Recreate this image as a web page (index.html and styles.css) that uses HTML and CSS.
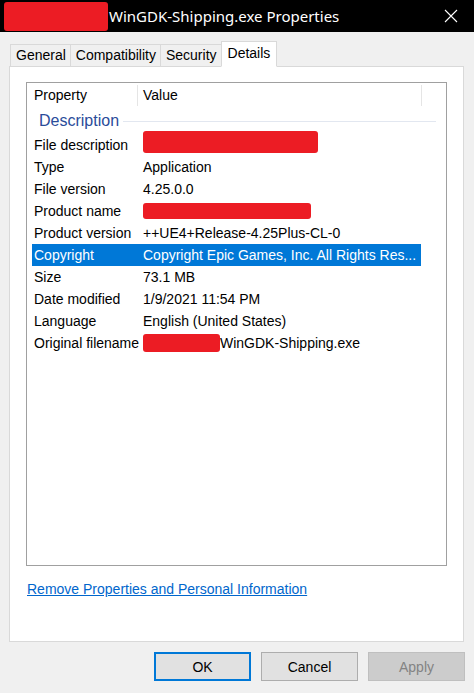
FILE: index.html
```html
<!DOCTYPE html>
<html lang="en">
<head>
    <meta charset="UTF-8">
    <meta name="viewport" content="width=device-width, initial-scale=1.0">
    <title>WinGDK-Shipping.exe Properties</title>
    <link rel="stylesheet" href="styles.css">
</head>
<body>
    <div class="window">
        <div class="titlebar">
            <span class="redact redact-title"></span>
            <span class="title">WinGDK-Shipping.exe Properties</span>
            <svg class="close" width="14" height="14" viewBox="0 0 14 14">
                <path d="M1 1 L13 13 M13 1 L1 13" stroke="#fff" stroke-width="1.1" fill="none"/>
            </svg>
        </div>

        <div class="tabs">
            <div class="tab">General</div>
            <div class="tab">Compatibility</div>
            <div class="tab">Security</div>
            <div class="tab active">Details</div>
        </div>

        <div class="panel">
            <div class="listview">
                <div class="list-header">
                    <div class="col-prop">Property</div>
                    <div class="col-value">Value</div>
                </div>

                <div class="group">
                    <span class="group-title">Description</span>
                    <span class="group-line"></span>
                </div>

                <div class="row">
                    <div class="cell-prop">File description</div>
                    <div class="cell-value"><span class="redact redact-desc"></span></div>
                </div>
                <div class="row">
                    <div class="cell-prop">Type</div>
                    <div class="cell-value">Application</div>
                </div>
                <div class="row">
                    <div class="cell-prop">File version</div>
                    <div class="cell-value">4.25.0.0</div>
                </div>
                <div class="row">
                    <div class="cell-prop">Product name</div>
                    <div class="cell-value"><span class="redact redact-product"></span></div>
                </div>
                <div class="row">
                    <div class="cell-prop">Product version</div>
                    <div class="cell-value">++UE4+Release-4.25Plus-CL-0</div>
                </div>
                <div class="row selected">
                    <div class="cell-prop">Copyright</div>
                    <div class="cell-value">Copyright Epic Games, Inc. All Rights Res...</div>
                </div>
                <div class="row">
                    <div class="cell-prop">Size</div>
                    <div class="cell-value">73.1 MB</div>
                </div>
                <div class="row">
                    <div class="cell-prop">Date modified</div>
                    <div class="cell-value">1/9/2021 11:54 PM</div>
                </div>
                <div class="row">
                    <div class="cell-prop">Language</div>
                    <div class="cell-value">English (United States)</div>
                </div>
                <div class="row">
                    <div class="cell-prop">Original filename</div>
                    <div class="cell-value"><span class="redact redact-file"></span>WinGDK-Shipping.exe</div>
                </div>
            </div>

            <a class="remove-link" href="#">Remove Properties and Personal Information</a>
        </div>

        <div class="buttons">
            <button class="btn default">OK</button>
            <button class="btn">Cancel</button>
            <button class="btn disabled">Apply</button>
        </div>
    </div>
</body>
</html>
```

FILE: styles.css
```css
* {
    margin: 0;
    padding: 0;
    box-sizing: border-box;
}

body {
    background-color: #f0f0f0;
    font-family: 'Liberation Sans', Arial, sans-serif;
    font-size: 14px;
    color: #000;
    width: 474px;
    height: 693px;
    overflow: hidden;
}

.titlebar {
    height: 32px;
    background-color: #000;
    display: flex;
    align-items: center;
}

.redact {
    display: inline-block;
    background-color: #ec1c24;
    border-radius: 3px;
}

.redact-title {
    width: 104px;
    height: 29px;
    margin-left: 4px;
}

.title {
    color: #fff;
    font-family: 'Noto Sans', 'Open Sans', sans-serif;
    font-size: 15px;
    margin-left: 1px;
}

.close {
    margin-left: auto;
    margin-right: 16px;
}

.tabs {
    display: flex;
    align-items: flex-end;
    margin-top: 9px;
    padding-left: 10px;
    position: relative;
    z-index: 1;
}

.tab {
    height: 23px;
    line-height: 21px;
    padding: 0 4px 0 5px;
    border: 1px solid #d9d9d9;
    border-right: none;
    background-color: #f0f0f0;
    margin-bottom: -1px;
}

.tab.active {
    height: 26px;
    line-height: 23px;
    padding: 0 6px;
    background-color: #fff;
    border: 1px solid #d9d9d9;
    border-bottom-color: #fff;
}

.panel {
    height: 576px;
    margin: 0 10px 0 9px;
    background-color: #fff;
    border: 1px solid #d9d9d9;
    padding: 15px 16px 0 16px;
    display: flex;
    flex-direction: column;
}

.listview {
    height: 484px;
    border: 1px solid #a0a0a0;
}

.list-header {
    height: 24px;
    display: flex;
    align-items: center;
    padding-left: 5px;
}

.col-prop,
.col-value {
    height: 21px;
    line-height: 21px;
    border-right: 1px solid #e5e5e5;
}

.col-prop {
    width: 106px;
    padding-left: 2px;
}

.col-value {
    width: 284px;
    padding-left: 5px;
}

.group {
    height: 27px;
    display: flex;
    align-items: center;
    padding-left: 12px;
    padding-right: 10px;
    padding-top: 1px;
}

.group-title {
    font-size: 16px;
    color: #2a4c9a;
}

.group-line {
    flex: 1;
    height: 1px;
    background-color: #e2e7f0;
    margin-left: 4px;
}

.row {
    height: 22px;
    width: 389px;
    margin-left: 5px;
    display: flex;
    align-items: center;
    white-space: nowrap;
}

.cell-prop {
    width: 106px;
    padding-left: 2px;
}

.cell-value {
    padding-left: 5px;
    display: flex;
    align-items: center;
}

.row.selected {
    background-color: #0078d7;
    color: #fff;
}

.redact-desc {
    width: 175px;
    height: 22px;
    margin-top: -6px;
}

.redact-product {
    width: 168px;
    height: 16px;
}

.redact-file {
    width: 77px;
    height: 18px;
}

.remove-link {
    margin-top: 15px;
    margin-left: 1px;
    color: #0066cc;
    text-decoration: underline;
    align-self: flex-start;
}

.buttons {
    display: flex;
    justify-content: flex-end;
    gap: 10px;
    padding-right: 9px;
    margin-top: 10px;
}

.btn {
    width: 97px;
    height: 29px;
    background-color: #e1e1e1;
    border: 1px solid #adadad;
    font-family: 'Liberation Sans', Arial, sans-serif;
    font-size: 14px;
    color: #000;
}

.btn.default {
    border: 2px solid #0078d7;
}

.btn.disabled {
    background-color: #cccccc;
    border-color: #bfbfbf;
    color: #838383;
}
```
